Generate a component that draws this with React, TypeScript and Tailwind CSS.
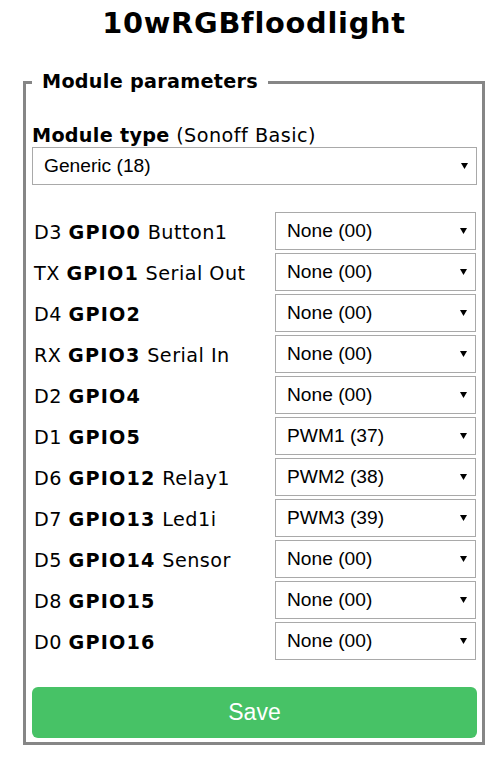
import { useState } from 'react'

type Pin = {
  board: string
  gpio: string
  note?: string
  value: string
}

const pins: Pin[] = [
  { board: 'D3', gpio: 'GPIO0', note: 'Button1', value: 'None (00)' },
  { board: 'TX', gpio: 'GPIO1', note: 'Serial Out', value: 'None (00)' },
  { board: 'D4', gpio: 'GPIO2', value: 'None (00)' },
  { board: 'RX', gpio: 'GPIO3', note: 'Serial In', value: 'None (00)' },
  { board: 'D2', gpio: 'GPIO4', value: 'None (00)' },
  { board: 'D1', gpio: 'GPIO5', value: 'PWM1 (37)' },
  { board: 'D6', gpio: 'GPIO12', note: 'Relay1', value: 'PWM2 (38)' },
  { board: 'D7', gpio: 'GPIO13', note: 'Led1i', value: 'PWM3 (39)' },
  { board: 'D5', gpio: 'GPIO14', note: 'Sensor', value: 'None (00)' },
  { board: 'D8', gpio: 'GPIO15', value: 'None (00)' },
  { board: 'D0', gpio: 'GPIO16', value: 'None (00)' },
]

const options = ['None (00)', 'PWM1 (37)', 'PWM2 (38)', 'PWM3 (39)', 'Generic (18)']

function Select({ value, onChange }: { value: string; onChange: (v: string) => void }) {
  return (
    <div className="relative h-[38px] w-full">
      <select
        value={value}
        onChange={(e) => onChange(e.target.value)}
        className="h-full w-full appearance-none rounded-none border border-[#a9a9a9] bg-white pl-[11px] pr-8 text-[19.2px] tracking-normal text-black outline-none font-['Liberation_Sans',Arial,sans-serif]"
      >
        {options.map((o) => (
          <option key={o} value={o}>
            {o}
          </option>
        ))}
      </select>
      {/* dropdown arrow */}
      <svg
        className="pointer-events-none absolute right-[9px] top-1/2 -translate-y-1/2"
        width="7"
        height="6"
        viewBox="0 0 7 6"
      >
        <path d="M0 0h7L3.5 6z" fill="#000" />
      </svg>
    </div>
  )
}

export default function App() {
  const [moduleType, setModuleType] = useState('Generic (18)')
  const [values, setValues] = useState(pins.map((p) => p.value))

  return (
    <div className="min-h-screen bg-white text-black tracking-[0.03em] font-['DejaVu_Sans',Verdana,sans-serif]">
      <div className="ml-[23px] w-[462px]">
        <h2 className="mt-[6px] text-center text-[28.8px] font-bold leading-[34px] tracking-[0.026em]">
          10wRGBfloodlight
        </h2>

        <fieldset className="mt-[31px] border-[3px] border-[#868686] pb-[4px] pl-[6px] pr-[5px]">
          <legend className="px-[10px] text-[19.2px] font-bold leading-[22px] tracking-[0.015em]">
            Module parameters
          </legend>

          <div className="pt-[32px] text-[19.2px] leading-[22px]">
            <b className="tracking-[0.015em]">Module type</b> (Sonoff Basic)
          </div>
          <Select value={moduleType} onChange={setModuleType} />

          <div className="mt-[27px] flex flex-col gap-[3px]">
            {pins.map((p, i) => (
              <div key={p.gpio} className="flex items-center">
                <div className="flex-1 pl-[2px] pt-[3px] text-[19.2px] leading-[22px]">
                  {p.board} <b className="tracking-[0.062em]">{p.gpio}</b>
                  {p.note ? ` ${p.note}` : ''}
                </div>
                <div className="mr-[1px] w-[201px]">
                  <Select
                    value={values[i]}
                    onChange={(v) =>
                      setValues((prev) => prev.map((x, j) => (j === i ? v : x)))
                    }
                  />
                </div>
              </div>
            ))}
          </div>

          <button className="mt-[27px] h-[51px] w-full rounded-[6px] bg-[#47c266] text-[23px] tracking-normal text-white font-['Liberation_Sans',Arial,sans-serif]">
            Save
          </button>
        </fieldset>
      </div>
    </div>
  )
}
